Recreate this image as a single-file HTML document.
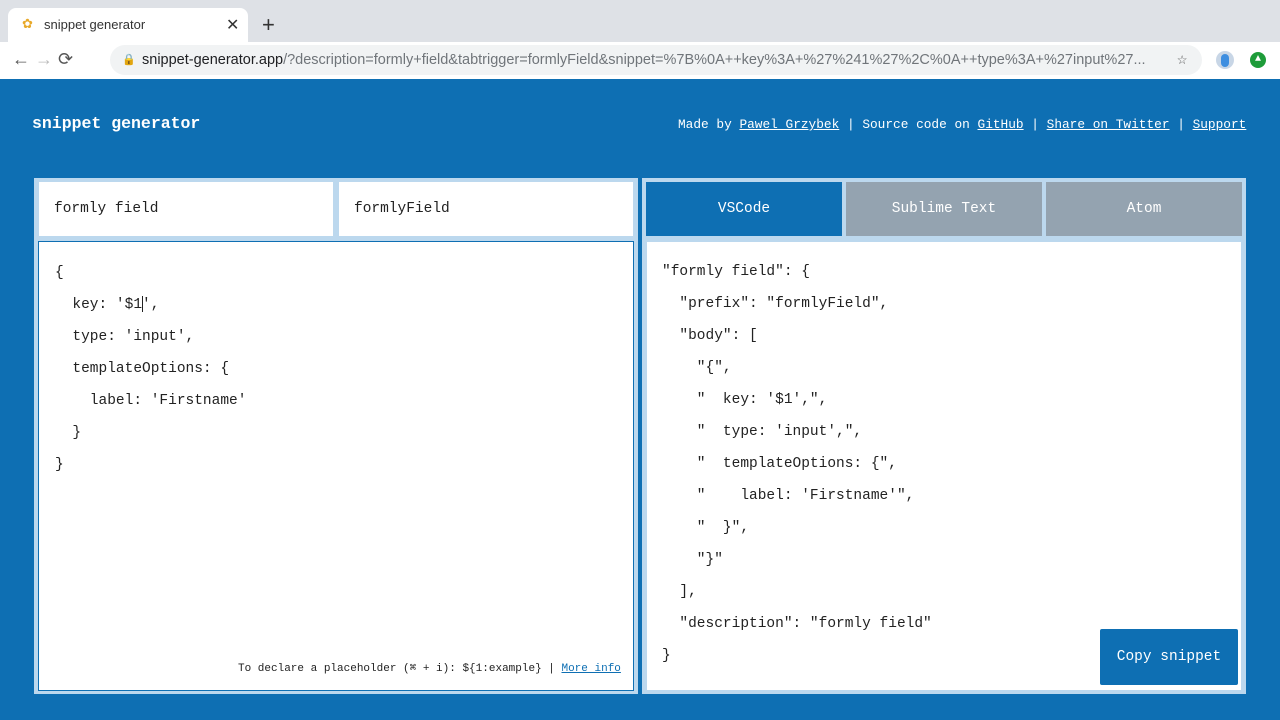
<!DOCTYPE html>
<html><head><meta charset="utf-8"><style>
*{box-sizing:border-box;margin:0;padding:0}
body{width:1280px;height:720px;overflow:hidden;background:#0e6fb3;font-family:"Liberation Mono",monospace;position:relative}
.abs{position:absolute}
.chrome{left:0;top:0;width:1280px;height:79px;background:#fff}
.tabbar{left:0;top:0;width:1280px;height:42px;background:#dee1e6}
.tab{left:8px;top:8px;width:240px;height:34px;background:#fff;border-radius:8px 8px 0 0;font:13px "Liberation Sans",sans-serif;color:#333}
.url{left:110px;top:45px;width:1092px;height:30px;background:#f1f3f4;border-radius:15px;font:14.5px "Liberation Sans",sans-serif;color:#202124;line-height:30px;padding-left:32px;white-space:nowrap;overflow:hidden}
.panel{background:#bcd8ee}
.inp{background:#fff;font-size:14.5px;line-height:54px;padding-left:15px;color:#222}
.code{background:#fff;font-size:14.5px;color:#222;line-height:32px;white-space:pre}
.t{font-size:14.5px;line-height:54px;text-align:center;color:#fff}
a{color:#fff}
.caret{display:inline-block;width:1px;height:16px;background:#222;vertical-align:middle;margin:0 -1px 0 0}
</style></head><body>
<div class="abs chrome"></div>
<div class="abs tabbar"></div>
<div class="abs tab"><span class="abs" style="left:14px;top:8px;color:#e8a92a">✿</span><span class="abs" style="left:36px;top:9px">snippet generator</span><span class="abs" style="left:218px;top:7px;font-size:16px">✕</span></div>
<div class="abs" style="left:262px;top:12px;font:22px 'Liberation Sans';color:#333">+</div>
<div class="abs" style="left:12px;top:49px;font:18px 'Liberation Sans';color:#555">← <span style="color:#bbb">→</span> ⟳</div>
<div class="abs url"><span class="abs" style="left:12px;top:0;font-size:11px;color:#555">🔒</span>snippet-generator.app<span style="color:#70757a">/?description=formly+field&amp;tabtrigger=formlyField&amp;snippet=%7B%0A++key%3A+%27%241%27%2C%0A++type%3A+%27input%27...</span></div>
<div class="abs" style="left:1177px;top:49px;font-size:17px;color:#555">☆</div>
<div class="abs" style="left:1216px;top:51px;width:18px;height:18px;border-radius:50%;background:#c8d6e6"><div style="margin:3px 5px;width:8px;height:13px;background:#3d8ee0;border-radius:4px"></div></div>
<div class="abs" style="left:1250px;top:52px;width:16px;height:16px;border-radius:50%;background:#1e9c3a;color:#fff;font-size:10px;text-align:center;line-height:16px">▲</div>

<div class="abs" style="left:32px;top:114px;font-size:16.5px;color:#fff;font-weight:bold">snippet generator</div>
<div class="abs" style="left:678px;top:117px;font-size:12.8px;color:#fff;white-space:pre">Made by <a href="#">Pawel Grzybek</a> | Source code on <a href="#">GitHub</a> | <a href="#">Share on Twitter</a> | <a href="#">Support</a></div>

<div class="abs panel" style="left:34px;top:178px;width:604px;height:516px"></div>
<div class="abs inp" style="left:39px;top:182px;width:294px;height:54px">formly field</div>
<div class="abs inp" style="left:339px;top:182px;width:294px;height:54px">formlyField</div>
<div class="abs code" style="left:38px;top:241px;width:596px;height:450px;border:1px solid #0e6fb3;padding:15px 0 0 16px">{
  key: '$1<span class="caret"></span>',
  type: 'input',
  templateOptions: {
    label: 'Firstname'
  }
}</div>
<div class="abs" style="left:238px;top:661px;font-size:11px;color:#222;white-space:pre">To declare a placeholder (⌘ + i): ${1:example} | <span style="color:#0e6fb3;text-decoration:underline">More info</span></div>

<div class="abs panel" style="left:642px;top:178px;width:604px;height:516px"></div>
<div class="abs t" style="left:646px;top:182px;width:196px;height:54px;background:#0e6fb3">VSCode</div>
<div class="abs t" style="left:846px;top:182px;width:196px;height:54px;background:#94a3b0">Sublime Text</div>
<div class="abs t" style="left:1046px;top:182px;width:196px;height:54px;background:#94a3b0">Atom</div>
<div class="abs code" style="left:647px;top:242px;width:594px;height:448px;padding:14px 0 0 15px">"formly field": {
  "prefix": "formlyField",
  "body": [
    "{",
    "  key: '$1',",
    "  type: 'input',",
    "  templateOptions: {",
    "    label: 'Firstname'",
    "  }",
    "}"
  ],
  "description": "formly field"
}</div>
<div class="abs t" style="left:1100px;top:629px;width:138px;height:56px;background:#0e6fb3;line-height:56px;border-radius:2px">Copy snippet</div>
</body></html>
